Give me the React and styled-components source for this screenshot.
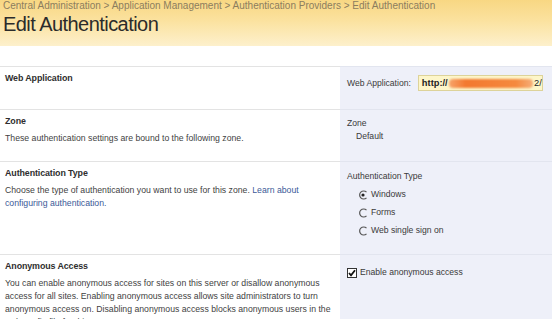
import React from "react";
import styled, { createGlobalStyle } from "styled-components";

const Global = createGlobalStyle`
  html, body { margin: 0; padding: 0; background: #fff; }
  body { font-family: "Liberation Sans", Arial, sans-serif; overflow: hidden; }
`;

const Page = styled.div`
  width: 552px;
  height: 319px;
  overflow: hidden;
  background: #fff;
`;

const Header = styled.div`
  height: 46px;
  padding: 0 0 0 3px;
  background: linear-gradient(to bottom, #f8d783 0%, #fbe29f 45%, #fdf0cc 100%);
  box-sizing: border-box;
`;

const Crumbs = styled.div`
  font-size: 10px;
  color: #8c7d5e;
  line-height: 12px;
  white-space: nowrap;
`;

const Title = styled.h1`
  margin: 1px 0 0 0;
  font-size: 20px;
  font-weight: normal;
  color: #2b2b2b;
  line-height: 22px;
  letter-spacing: -0.55px;
`;

const Spacer = styled.div`
  height: 20px;
`;

const Row = styled.div`
  display: grid;
  grid-template-columns: 340px 1fr;
  box-sizing: border-box;
  height: ${(p) => p.$h}px;
  border-top: 1px solid #e3e3e3;
`;

const Left = styled.div`
  padding: 5px 5px 0 5px;
`;

const Right = styled.div`
  background: #eef0f9;
  border-top: 1px solid #e2e5ef;
  margin-top: -1px;
  padding: ${(p) => p.$pt ?? 12}px 6px 0 7px;
  font-size: 8.6px;
  color: #3a3a3a;
`;

const Heading = styled.div`
  font-size: 8.9px;
  font-weight: bold;
  color: #2e2e2e;
  line-height: 12px;
  letter-spacing: -0.1px;
`;

const Desc = styled.div`
  margin-top: 5px;
  font-size: 8.7px;
  color: #3f3f3f;
  line-height: 13px;
`;

const Link = styled.span`
  color: #3b5a98;
`;

const FieldLine = styled.div`
  display: flex;
  align-items: center;
  gap: 7px;
  height: 16px;
`;

const UrlBox = styled.div`
  display: flex;
  align-items: center;
  width: 125px;
  height: 16px;
  box-sizing: border-box;
  background: #fdf6c9;
  border: 1px solid #ddd39a;
  padding-left: 3px;
  font-size: 9.3px;
  font-weight: bold;
  color: #222;
`;

const Smear = styled.span`
  display: inline-block;
  width: 88px;
  height: 9px;
  margin-left: 1px;
  background: linear-gradient(to right, #f7a46a, #f3782f 20%, #f58a3f 80%, #f6ae78);
  border-radius: 4px;
  filter: blur(0.8px);
`;

const Tail = styled.span`
  font-weight: normal;
  margin-left: 1px;
`;

const Label = styled.div`
  line-height: 13px;
`;

const Value = styled.div`
  padding-left: 9px;
  line-height: 13px;
`;

const Options = styled.div`
  display: flex;
  flex-direction: column;
  gap: 5px;
  padding: 5px 0 0 12px;
`;

const Option = styled.label`
  display: flex;
  align-items: center;
  gap: 3px;
  height: 13px;
  line-height: 13px;
  svg { display: block; }
`;

const Radio = ({ checked }) => (
  <svg width="9" height="10" viewBox="0 0 9 10">
    <path d="M7.5 2.2 A4 4 0 1 0 7.5 7.8" fill="none" stroke="#555" strokeWidth="1.2" />
    {checked && <circle cx="4" cy="5" r="1.6" fill="#222" />}
  </svg>
);

const Check = () => (
  <svg width="10" height="10" viewBox="0 0 10 10">
    <rect x="0.5" y="0.5" width="9" height="9" fill="#fff" stroke="#333" />
    <path d="M2 5 L4 7.3 L8 2.3" fill="none" stroke="#111" strokeWidth="1.8" />
  </svg>
);

export default function App() {
  return (
    <Page>
      <Global />
      <Header>
        <Crumbs>
          Central Administration &gt; Application Management &gt; Authentication Providers &gt; Edit Authentication
        </Crumbs>
        <Title>Edit Authentication</Title>
      </Header>
      <Spacer />
      <Row $h={43}>
        <Left>
          <Heading>Web Application</Heading>
        </Left>
        <Right $pt={8}>
          <FieldLine>
            <span>Web Application:</span>
            <UrlBox>
              http://<Smear />
              <Tail>2/</Tail>
            </UrlBox>
          </FieldLine>
        </Right>
      </Row>
      <Row $h={52}>
        <Left>
          <Heading>Zone</Heading>
          <Desc>These authentication settings are bound to the following zone.</Desc>
        </Left>
        <Right $pt={7}>
          <Label>Zone</Label>
          <Value>Default</Value>
        </Right>
      </Row>
      <Row $h={93}>
        <Left>
          <Heading>Authentication Type</Heading>
          <Desc>
            Choose the type of authentication you want to use for this zone. <Link>Learn about configuring authentication.</Link>
          </Desc>
        </Left>
        <Right $pt={8}>
          <Label>Authentication Type</Label>
          <Options>
            <Option><Radio checked />Windows</Option>
            <Option><Radio />Forms</Option>
            <Option><Radio />Web single sign on</Option>
          </Options>
        </Right>
      </Row>
      <Row $h={80}>
        <Left>
          <Heading>Anonymous Access</Heading>
          <Desc>
            You can enable anonymous access for sites on this server or disallow anonymous access for all sites. Enabling anonymous access allows site administrators to turn anonymous access on. Disabling anonymous access blocks anonymous users in the web.config file for this zone.
          </Desc>
        </Left>
        <Right $pt={11}>
          <Option><Check />Enable anonymous access</Option>
        </Right>
      </Row>
    </Page>
  );
}
